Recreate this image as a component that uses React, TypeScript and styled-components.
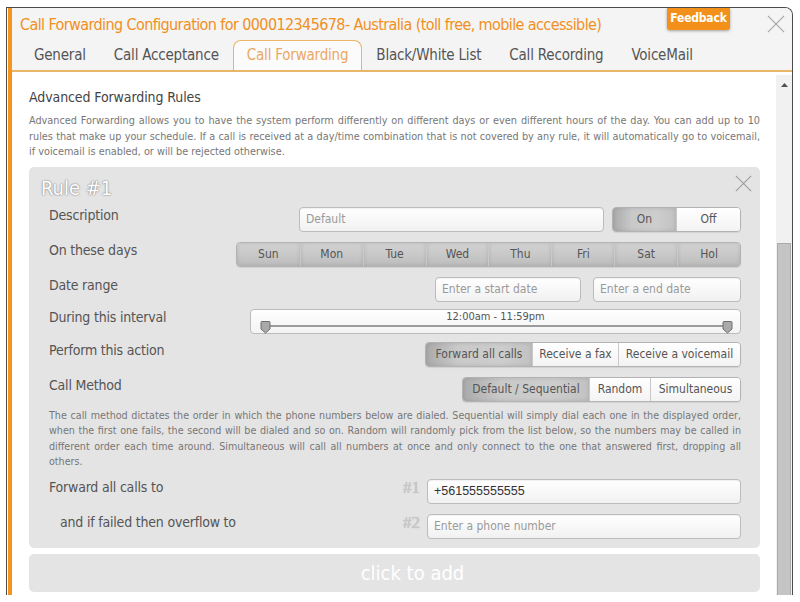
import React from "react";
import styled, { createGlobalStyle } from "styled-components";

const FONT = `"DejaVu Sans Condensed", "Liberation Sans Narrow", Roboto, sans-serif`;

const GlobalStyle = createGlobalStyle`
  html, body {
    margin: 0;
    padding: 0;
    background: #fff;
  }
  body {
    font-family: ${FONT};
    color: #555;
  }
  * { box-sizing: border-box; }
`;

const Page = styled.div`
  width: 800px;
  height: 602px;
  padding: 7px 7px 0 6px;
  overflow: hidden;
`;

const Dialog = styled.div`
  position: relative;
  width: 787px;
  height: 588px;
  border: 1px solid #4b4b4b;
  border-bottom: none;
  border-top-right-radius: 8px;
  overflow: hidden;
  display: flex;
  background: #fff;
`;

const OrangeBar = styled.div`
  width: 4px;
  margin-left: 1px;
  background: #f7941d;
  flex: none;
`;

const Main = styled.div`
  flex: 1;
  display: flex;
  flex-direction: column;
  min-width: 0;
`;

const Header = styled.div`
  background: #f4f4f4;
  height: 64px;
  border-bottom: 2px solid #e9b566;
  display: flex;
  flex-direction: column;
  flex: none;
`;

const TitleRow = styled.div`
  height: 32px;
  display: flex;
  align-items: center;
  justify-content: space-between;
  padding: 0 7px 0 8px;
`;

const Title = styled.div`
  font-size: 16px;
  letter-spacing: -0.6px;
  color: #f0901e;
  white-space: nowrap;
`;

const Tabs = styled.div`
  display: flex;
  align-items: flex-end;
  height: 30px;
  padding-left: 8px;
`;

const Tab = styled.div<{ $active?: boolean }>`
  height: 30px;
  line-height: 29px;
  padding: 0 13px;
  font-size: 15px;
  letter-spacing: -0.2px;
  white-space: nowrap;
  color: ${(p) => (p.$active ? "#eaa865" : "#555")};
  background: ${(p) => (p.$active ? "#fbfbfb" : "transparent")};
  border: 1px solid ${(p) => (p.$active ? "#e9b566" : "transparent")};
  border-bottom: none;
  border-radius: 8px 8px 0 0;
`;

const Feedback = styled.div`
  position: absolute;
  top: 0;
  right: 62px;
  width: 63px;
  height: 22px;
  line-height: 21px;
  text-align: center;
  background: #f39019;
  color: #fff;
  font-size: 12px;
  font-weight: bold;
  letter-spacing: -0.2px;
  border-radius: 0 0 3px 3px;
  box-shadow: 0 1px 3px rgba(0, 0, 0, 0.35);
`;

const Body = styled.div`
  flex: 1;
  display: flex;
  min-height: 0;
`;

const Content = styled.div`
  flex: 1;
  padding: 16px 16px 0 17px;
  overflow: hidden;
`;

const Heading = styled.div`
  font-size: 14px;
  letter-spacing: -0.1px;
  line-height: 18px;
  color: #444;
`;

const Para = styled.p<{ $mt: number; $size: number }>`
  margin: ${(p) => p.$mt}px 0 0;
  font-size: ${(p) => p.$size}px;
  line-height: 15.5px;
  color: #777;
  text-align: justify;
`;

const Card = styled.div`
  position: relative;
  margin-top: 7px;
  background: #e4e4e4;
  border-radius: 5px;
  padding: 8px 19px 9px 20px;
`;

const RuleTitle = styled.div`
  font-size: 20px;
  line-height: 26px;
  height: 26px;
  margin-left: -8px;
  color: #fff;
  text-shadow: 0 0 2px #7a7a7a, 0 0 1px #999;
`;

const CardClose = styled.div`
  position: absolute;
  top: 8px;
  right: 8px;
  width: 17px;
  height: 17px;
`;

const Row = styled.div<{ $mt: number }>`
  display: flex;
  align-items: flex-start;
  margin-top: ${(p) => p.$mt}px;
  height: 25px;
`;

const Label = styled.div<{ $indent?: number }>`
  flex: 1;
  font-size: 14px;
  letter-spacing: -0.2px;
  line-height: 17px;
  color: #555;
  white-space: nowrap;
  padding-left: ${(p) => p.$indent || 0}px;
`;

const TextInput = styled.div<{ $w: number; $value?: boolean }>`
  width: ${(p) => p.$w}px;
  height: 25px;
  border: 1px solid #bcbcbc;
  border-radius: 4px;
  background: linear-gradient(#ffffff, #f1f1f1);
  box-shadow: inset 0 1px 1px rgba(0, 0, 0, 0.06);
  padding: 0 6px;
  line-height: 23px;
  font-size: ${(p) => (p.$value ? "12.5px" : "12px")};
  font-family: ${(p) => (p.$value ? `"Liberation Sans", Arial, sans-serif` : FONT)};
  color: ${(p) => (p.$value ? "#333" : "#9a9a9a")};
  white-space: nowrap;
`;

const Gap = styled.div<{ $w: number }>`
  width: ${(p) => p.$w}px;
  flex: none;
`;

const Group = styled.div`
  display: flex;
  height: 25px;
  border: 1px solid #b3b3b3;
  border-radius: 4px;
  overflow: hidden;
  box-shadow: 0 1px 1px rgba(0, 0, 0, 0.08);
`;

const Seg = styled.div<{ $w: number; $active?: boolean; $shade?: boolean }>`
  width: ${(p) => p.$w}px;
  text-align: center;
  font-size: 12px;
  line-height: 23px;
  color: #555;
  white-space: nowrap;
  background: ${(p) =>
    p.$active
      ? "linear-gradient(to right, #aaaaaa, #c9c9c9 30%, #cdcdcd 70%, #c2c2c2)"
      : p.$shade
      ? "linear-gradient(#d3d3d3, #c6c6c6 60%, #bcbcbc)"
      : "linear-gradient(#ffffff, #f3f3f3)"};
  box-shadow: ${(p) =>
    p.$active || p.$shade ? "inset 0 0 4px rgba(0,0,0,0.12)" : "none"};
  & + & {
    border-left: 1px solid ${(p) => (p.$shade ? "#d6d6d6" : "#c9c9c9")};
  }
`;

const SliderBox = styled.div`
  position: relative;
  width: 491px;
  height: 25px;
  border: 1px solid #bcbcbc;
  border-radius: 4px;
  background: linear-gradient(#ffffff, #f3f3f3);
`;

const SliderText = styled.div`
  text-align: center;
  font-size: 11px;
  line-height: 13px;
  color: #555;
`;

const Track = styled.div`
  position: absolute;
  left: 14px;
  right: 13px;
  top: 15px;
  height: 2px;
  background: #9c9c9c;
`;

const Handle = styled.div<{ $left: number }>`
  position: absolute;
  top: 9px;
  left: ${(p) => p.$left}px;
  width: 11px;
  height: 13px;
`;

const Hash = styled.div`
  font-family: "Liberation Serif", "DejaVu Serif", serif;
  font-size: 17px;
  line-height: 18px;
  color: #c9c9c9;
  text-shadow: 0 0 1px #aaa;
  margin-right: 7px;
`;

const AddCard = styled.div`
  margin-top: 6px;
  height: 38px;
  padding-left: 36px;
  background: #e4e4e4;
  border-radius: 5px;
  text-align: center;
  font-size: 20px;
  line-height: 38px;
  color: #fff;
`;

const Scrollbar = styled.div`
  width: 16px;
  flex: none;
  margin-top: 3px;
  background: #f1f1f1;
  display: flex;
  flex-direction: column;
  align-items: center;
`;

const ScrollArrow = styled.div`
  height: 20px;
  display: flex;
  align-items: center;
  justify-content: center;
`;

const Thumb = styled.div`
  margin-top: 148px;
  flex: 1;
  width: 14px;
  background: #c4c4c4;
  border: 1px solid #ababab;
  border-bottom: none;
`;

function XIcon({ size, color }: { size: number; color: string }) {
  return (
    <svg width={size} height={size} viewBox="0 0 20 20">
      <path d="M1 1 L19 19 M19 1 L1 19" stroke={color} strokeWidth="1.2" fill="none" />
    </svg>
  );
}

function HandleIcon() {
  return (
    <svg width="11" height="13" viewBox="0 0 11 13">
      <path d="M1 1.5 Q1 0.5 2 0.5 H9 Q10 0.5 10 1.5 V8 L5.5 12 L1 8 Z" fill="#a9a9a9" stroke="#6e6e6e" strokeWidth="1" />
    </svg>
  );
}

const days = ["Sun", "Mon", "Tue", "Wed", "Thu", "Fri", "Sat", "Hol"];

export default function App() {
  return (
    <Page>
      <GlobalStyle />
      <Dialog>
        <OrangeBar />
        <Main>
          <Header>
            <TitleRow>
              <Title>Call Forwarding Configuration for 000012345678- Australia (toll free, mobile accessible)</Title>
              <XIcon size={18} color="#a3a3a3" />
            </TitleRow>
            <Tabs>
              <Tab>General</Tab>
              <Tab>Call Acceptance</Tab>
              <Tab $active>Call Forwarding</Tab>
              <Tab>Black/White List</Tab>
              <Tab>Call Recording</Tab>
              <Tab>VoiceMail</Tab>
            </Tabs>
          </Header>
          <Feedback>Feedback</Feedback>
          <Body>
            <Content>
              <Heading>Advanced Forwarding Rules</Heading>
              <Para $mt={7} $size={10.8}>
                Advanced Forwarding allows you to have the system perform differently on different days or even different hours of the day. You can add up to 10 rules that make up your schedule. If a call is received at a day/time combination that is not covered by any rule, it will automatically go to voicemail, if voicemail is enabled, or will be rejected otherwise.
              </Para>
              <Card>
                <RuleTitle>Rule #1</RuleTitle>
                <CardClose>
                  <XIcon size={17} color="#9a9a9a" />
                </CardClose>
                <Row $mt={6}>
                  <Label>Description</Label>
                  <TextInput $w={305}>Default</TextInput>
                  <Gap $w={8} />
                  <Group>
                    <Seg $w={63} $active>On</Seg>
                    <Seg $w={64}>Off</Seg>
                  </Group>
                </Row>
                <Row $mt={10}>
                  <Label>On these days</Label>
                  <Group>
                    {days.map((d) => (
                      <Seg key={d} $w={62.9} $shade>
                        {d}
                      </Seg>
                    ))}
                  </Group>
                </Row>
                <Row $mt={10}>
                  <Label>Date range</Label>
                  <TextInput $w={146}>Enter a start date</TextInput>
                  <Gap $w={12} />
                  <TextInput $w={148}>Enter a end date</TextInput>
                </Row>
                <Row $mt={7}>
                  <Label>During this interval</Label>
                  <SliderBox>
                    <SliderText>12:00am - 11:59pm</SliderText>
                    <Track />
                    <Handle $left={9}>
                      <HandleIcon />
                    </Handle>
                    <Handle $left={471}>
                      <HandleIcon />
                    </Handle>
                  </SliderBox>
                </Row>
                <Row $mt={8}>
                  <Label>Perform this action</Label>
                  <Group>
                    <Seg $w={106} $active>Forward all calls</Seg>
                    <Seg $w={86}>Receive a fax</Seg>
                    <Seg $w={122}>Receive a voicemail</Seg>
                  </Group>
                </Row>
                <Row $mt={10}>
                  <Label>Call Method</Label>
                  <Group>
                    <Seg $w={126} $active>Default / Sequential</Seg>
                    <Seg $w={61}>Random</Seg>
                    <Seg $w={90}>Simultaneous</Seg>
                  </Group>
                </Row>
                <Para $mt={6} $size={10.65}>
                  The call method dictates the order in which the phone numbers below are dialed. Sequential will simply dial each one in the displayed order, when the first one fails, the second will be dialed and so on. Random will randomly pick from the list below, so the numbers may be called in different order each time around. Simultaneous will call all numbers at once and only connect to the one that answered first, dropping all others.
                </Para>
                <Row $mt={9}>
                  <Label>Forward all calls to</Label>
                  <Hash>#1</Hash>
                  <TextInput $w={314} $value>+561555555555</TextInput>
                </Row>
                <Row $mt={10}>
                  <Label $indent={11}>and if failed then overflow to</Label>
                  <Hash>#2</Hash>
                  <TextInput $w={314}>Enter a phone number</TextInput>
                </Row>
              </Card>
              <AddCard>click to add</AddCard>
            </Content>
            <Scrollbar>
              <ScrollArrow>
                <svg width="7" height="4" viewBox="0 0 7 4">
                  <path d="M0 4 L3.5 0 L7 4 Z" fill="#505050" />
                </svg>
              </ScrollArrow>
              <Thumb />
            </Scrollbar>
          </Body>
        </Main>
      </Dialog>
    </Page>
  );
}
